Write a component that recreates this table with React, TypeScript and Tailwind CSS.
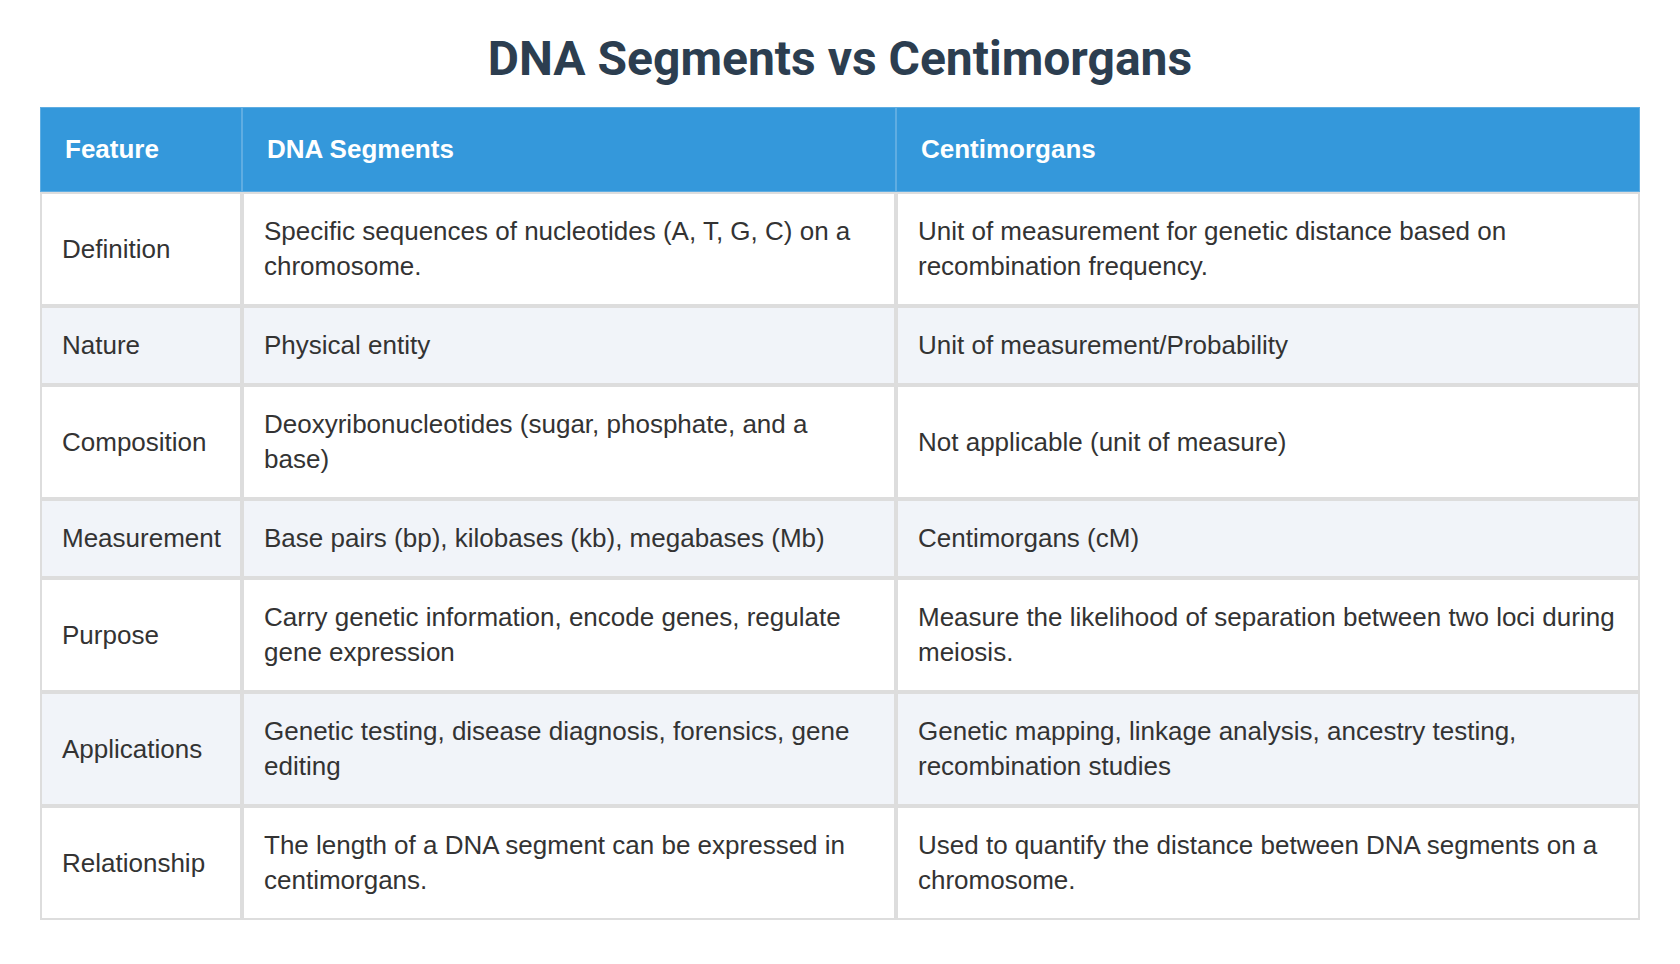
const ROWS: [string, string, string][] = [
  [
    "Definition",
    "Specific sequences of nucleotides (A, T, G, C) on a chromosome.",
    "Unit of measurement for genetic distance based on recombination frequency.",
  ],
  ["Nature", "Physical entity", "Unit of measurement/Probability"],
  [
    "Composition",
    "Deoxyribonucleotides (sugar, phosphate, and a base)",
    "Not applicable (unit of measure)",
  ],
  ["Measurement", "Base pairs (bp), kilobases (kb), megabases (Mb)", "Centimorgans (cM)"],
  [
    "Purpose",
    "Carry genetic information, encode genes, regulate gene expression",
    "Measure the likelihood of separation between two loci during meiosis.",
  ],
  [
    "Applications",
    "Genetic testing, disease diagnosis, forensics, gene editing",
    "Genetic mapping, linkage analysis, ancestry testing, recombination studies",
  ],
  [
    "Relationship",
    "The length of a DNA segment can be expressed in centimorgans.",
    "Used to quantify the distance between DNA segments on a chromosome.",
  ],
];

const HEADERS = ["Feature", "DNA Segments", "Centimorgans"];

export default function App() {
  return (
    <div className="min-h-[964px] bg-white px-[40px] pt-[32px] font-['Liberation_Sans',Arial,sans-serif]">
      <h1 className="mb-[21px] text-center font-['Roboto',sans-serif] text-[48px] font-bold leading-[54px] text-[#2c3e50]">
        DNA Segments vs Centimorgans
      </h1>

      <table className="w-[1600px] table-fixed border-separate border-spacing-0 text-left">
        <colgroup>
          <col className="w-[202px]" />
          <col className="w-[654px]" />
          <col className="w-[744px]" />
        </colgroup>
        <thead>
          <tr>
            {HEADERS.map((h) => (
              <th
                key={h}
                className="border border-[#5fade2] bg-[#3498db] p-[24px] text-[26px] font-bold leading-[35px] text-white"
              >
                {h}
              </th>
            ))}
          </tr>
        </thead>
        <tbody>
          {ROWS.map((row, i) => (
            <tr key={row[0]} className={i % 2 === 1 ? "bg-[#f1f4f9]" : "bg-white"}>
              {row.map((cell, j) => (
                <td
                  key={j}
                  className="border-2 border-[#dddddd] p-[20px] align-middle text-[26px] leading-[35px] text-[#333333]"
                >
                  {cell}
                </td>
              ))}
            </tr>
          ))}
        </tbody>
      </table>
    </div>
  );
}
